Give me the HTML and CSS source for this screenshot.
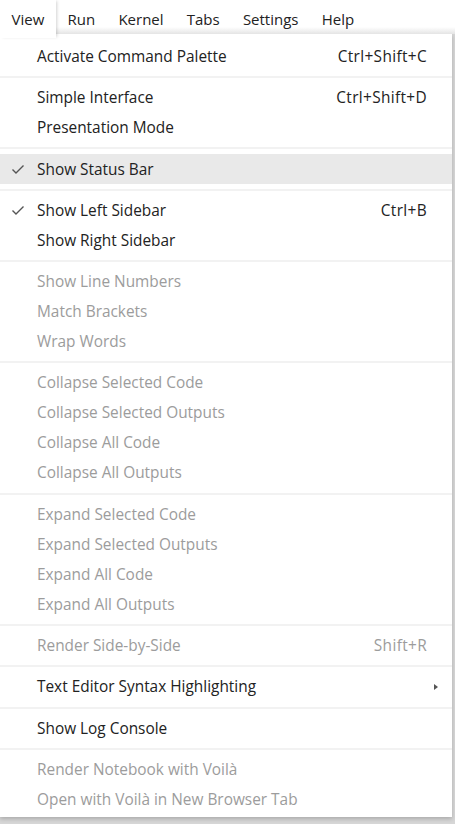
FILE: index.html
```html
<!DOCTYPE html>
<html>
<head>
<meta charset="utf-8">
<link rel="stylesheet" href="styles.css">
</head>
<body>
<div class="page">
  <div class="menubar">
    <div class="mb-item active">View</div>
    <div class="mb-item">Run</div>
    <div class="mb-item">Kernel</div>
    <div class="mb-item">Tabs</div>
    <div class="mb-item">Settings</div>
    <div class="mb-item">Help</div>
  </div>
  <div class="menu">
    <div class="row"><span class="check"></span><span class="label">Activate Command Palette</span><span class="key">Ctrl+Shift+C</span></div>
    <div class="sep"></div>
    <div class="row"><span class="check"></span><span class="label">Simple Interface</span><span class="key">Ctrl+Shift+D</span></div>
    <div class="row"><span class="check"></span><span class="label">Presentation Mode</span><span class="key"></span></div>
    <div class="sep"></div>
    <div class="row hover"><span class="check"><svg width="14" height="14" viewBox="0 0 14 14"><path d="M1.5 7.5 L5 11 L12.5 3.5" fill="none" stroke="#555" stroke-width="1.4"/></svg></span><span class="label">Show Status Bar</span><span class="key"></span></div>
    <div class="sep"></div>
    <div class="row"><span class="check"><svg width="14" height="14" viewBox="0 0 14 14"><path d="M1.5 7.5 L5 11 L12.5 3.5" fill="none" stroke="#555" stroke-width="1.4"/></svg></span><span class="label">Show Left Sidebar</span><span class="key">Ctrl+B</span></div>
    <div class="row"><span class="check"></span><span class="label">Show Right Sidebar</span><span class="key"></span></div>
    <div class="sep"></div>
    <div class="row off"><span class="check"></span><span class="label">Show Line Numbers</span><span class="key"></span></div>
    <div class="row off"><span class="check"></span><span class="label">Match Brackets</span><span class="key"></span></div>
    <div class="row off"><span class="check"></span><span class="label">Wrap Words</span><span class="key"></span></div>
    <div class="sep"></div>
    <div class="row off"><span class="check"></span><span class="label">Collapse Selected Code</span><span class="key"></span></div>
    <div class="row off"><span class="check"></span><span class="label">Collapse Selected Outputs</span><span class="key"></span></div>
    <div class="row off"><span class="check"></span><span class="label">Collapse All Code</span><span class="key"></span></div>
    <div class="row off"><span class="check"></span><span class="label">Collapse All Outputs</span><span class="key"></span></div>
    <div class="sep"></div>
    <div class="row off"><span class="check"></span><span class="label">Expand Selected Code</span><span class="key"></span></div>
    <div class="row off"><span class="check"></span><span class="label">Expand Selected Outputs</span><span class="key"></span></div>
    <div class="row off"><span class="check"></span><span class="label">Expand All Code</span><span class="key"></span></div>
    <div class="row off"><span class="check"></span><span class="label">Expand All Outputs</span><span class="key"></span></div>
    <div class="sep"></div>
    <div class="row off"><span class="check"></span><span class="label">Render Side-by-Side</span><span class="key">Shift+R</span></div>
    <div class="sep"></div>
    <div class="row"><span class="check"></span><span class="label">Text Editor Syntax Highlighting</span><span class="key"></span><span class="sub"></span></div>
    <div class="sep"></div>
    <div class="row"><span class="check"></span><span class="label">Show Log Console</span><span class="key"></span></div>
    <div class="sep"></div>
    <div class="row off"><span class="check"></span><span class="label">Render Notebook with Voilà</span><span class="key"></span></div>
    <div class="row off"><span class="check"></span><span class="label">Open with Voilà in New Browser Tab</span><span class="key"></span></div>
  </div>
</div>
</body>
</html>
```
FILE: styles.css
```css
html, body {
  margin: 0;
  padding: 0;
}
body {
  width: 455px;
  height: 824px;
  overflow: hidden;
  background: #d6d6d6;
  font-family: "Open Sans", "Noto Sans", sans-serif;
  font-size: 15.4px;
  color: #222;
}
.page {
  display: flex;
  flex-direction: column;
}
.menubar {
  display: flex;
  height: 34px;
  background: linear-gradient(to bottom, #fff 0, #fff 27px, #e4e4e4 34px);
  position: relative;
  z-index: 2;
  font-size: 15px;
}
.mb-item {
  padding: 0 11.6px;
  line-height: 38px;
  height: 34px;
  color: #222;
}
.mb-item.active {
  background: #fff;
  height: 38px;
  box-shadow: 2px 0 3px -1px rgba(0,0,0,0.18);
}
.menu {
  width: 452px;
  height: 783px;
  background: #fff;
  padding-top: 7.5px;
  box-sizing: border-box;
  display: flex;
  flex-direction: column;
  box-shadow: 0 2px 4px rgba(0,0,0,0.2);
}
.row {
  height: 30px;
  display: flex;
  align-items: center;
  flex: none;
}
.row.hover {
  background: #e9e9e9;
}
.row.off {
  color: #9c9c9c;
}
.check {
  width: 37px;
  flex: none;
  display: flex;
  justify-content: center;
  box-sizing: border-box;
}
.check svg {
  margin-left: -1px;
}
.label {
  flex: 1;
  white-space: nowrap;
}
.key {
  padding-right: 25px;
  white-space: nowrap;
  letter-spacing: 0.35px;
}
.sub {
  width: 0;
  height: 0;
  border-top: 3.5px solid transparent;
  border-bottom: 3.5px solid transparent;
  border-left: 4px solid #555;
  margin-right: 14px;
}
.sep {
  height: 11.3px;
  flex: none;
  display: flex;
  align-items: center;
}
.sep::after {
  content: "";
  display: block;
  width: 100%;
  height: 2px;
  background: #f2f2f2;
}
```
